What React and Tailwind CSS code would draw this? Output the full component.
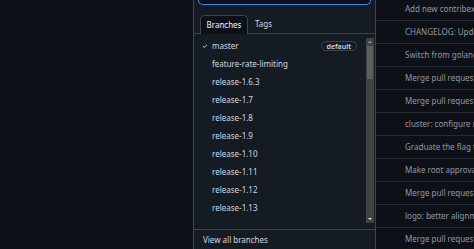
import React from 'react';

const branches = [
  'master',
  'feature-rate-limiting',
  'release-1.6.3',
  'release-1.7',
  'release-1.8',
  'release-1.9',
  'release-1.10',
  'release-1.11',
  'release-1.12',
  'release-1.13',
];

const commits = [
  'Add new contribex mailing list',
  'CHANGELOG: Update directory',
  'Switch from golang to distroless',
  'Merge pull request #1210',
  'Merge pull request #1208',
  'cluster: configure root',
  'Graduate the flag to beta',
  'Make root approval optional',
  'Merge pull request #1199',
  'logo: better alignment',
  'Merge pull request #1190',
];

const Check = () => (
  <svg width="6" height="6" viewBox="0 0 16 16" fill="#d1d7e0">
    <path d="M13.78 4.22a.75.75 0 0 1 0 1.06l-7.25 7.25a.75.75 0 0 1-1.06 0L2.22 9.28a.75.75 0 0 1 1.06-1.06L6 10.94l6.72-6.72a.75.75 0 0 1 1.06 0Z" />
  </svg>
);

const BranchRow = ({ name, current }) => (
  <div className="h-[18px] flex items-center pl-[8px] pr-[9px]">
    <span className="w-[6px] flex items-center">{current && <Check />}</span>
    <span className="ml-[4px] text-[8px] text-[#d1d7e0] whitespace-nowrap">{name}</span>
    {current && (
      <span className="ml-auto h-[10px] px-[5px] flex items-center rounded-full border border-[#3d444d] text-[7px] font-semibold text-[#d1d7e0] leading-none">
        default
      </span>
    )}
  </div>
);

const Scrollbar = () => (
  <div className="w-[8px] mt-[4px] mb-[6px] mr-[1px] bg-[#424242] flex flex-col">
    <div className="h-[8px] flex items-center justify-center">
      <div className="w-0 h-0 border-x-[2px] border-x-transparent border-b-[2px] border-b-[#a0a0a0]" />
    </div>
    <div className="h-[33px] bg-[#5e5e5e] mx-[1px]" />
    <div className="flex-1" />
    <div className="h-[8px] flex items-center justify-center">
      <div className="w-0 h-0 border-x-[2px] border-x-transparent border-t-[2px] border-t-[#e0e0e0]" />
    </div>
  </div>
);

export default function App() {
  return (
    <div className="w-[474px] h-[249px] overflow-hidden bg-[#0d1117] flex font-['Noto_Sans',sans-serif]">
      <div className="w-[193px] shrink-0" />

      {/* Branch picker */}
      <div className="w-[183px] shrink-0 flex flex-col bg-[#151b23] border-x border-[#3d444d]">
        <div className="h-[5px] mx-[4px] border-x border-b border-[#388bfd] rounded-b-[5px] bg-[#0d1117]" />

        <div className="mt-[10px] h-[19px] flex items-end pl-[6px] border-b border-[#3d444d]">
          <div className="w-[48px] h-[19px] -mb-px flex items-center justify-center bg-[#0d1117] border-x border-t border-[#3d444d] rounded-t-[5px] text-[8px] text-[#f0f6fc]">
            Branches
          </div>
          <div className="h-[19px] px-[7px] flex items-center text-[8px] text-[#d1d7e0]">Tags</div>
        </div>

        <div className="flex-1 flex">
          <div className="flex-1 pt-[3px]">
            {branches.map((b, i) => (
              <BranchRow key={b} name={b} current={i === 0} />
            ))}
          </div>
          <Scrollbar />
        </div>

        <div className="h-[20px] border-t border-[#3d444d] flex items-center pl-[9px] text-[8px] text-[#d1d7e0]">
          View all branches
        </div>
      </div>

      {/* Commit list */}
      <div className="flex-1 overflow-hidden">
        <div className="-mt-[2px]">
          {commits.map((c, i) => (
            <div
              key={i}
              className="h-[23px] border-b border-[#262c36] flex items-center pl-[29px] text-[8px] text-[#9198a1] whitespace-nowrap"
            >
              {c}
            </div>
          ))}
        </div>
      </div>
    </div>
  );
}
